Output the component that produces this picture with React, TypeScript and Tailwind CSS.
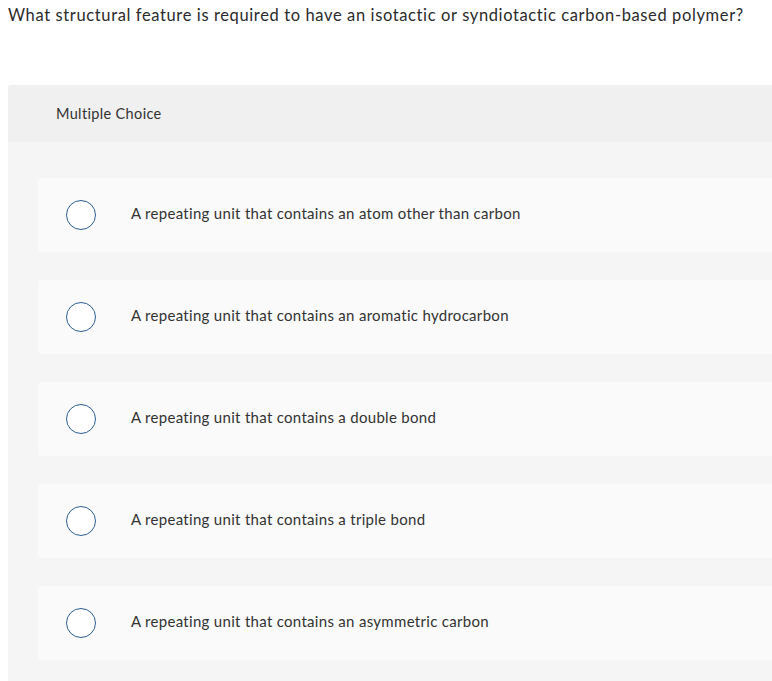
const options = [
  "A repeating unit that contains an atom other than carbon",
  "A repeating unit that contains an aromatic hydrocarbon",
  "A repeating unit that contains a double bond",
  "A repeating unit that contains a triple bond",
  "A repeating unit that contains an asymmetric carbon",
];

export default function App() {
  return (
    <div className="min-h-screen bg-white font-['Lato',sans-serif] text-[#2b2b2b] overflow-hidden">
      {/* Question */}
      <p className="pl-[8px] pt-[4px] text-[16.5px] leading-[22px] tracking-[0.62px] whitespace-nowrap">
        What structural feature is required to have an isotactic or syndiotactic carbon-based polymer?
      </p>

      {/* Answer panel */}
      <div className="ml-[8px] mt-[59px] rounded-tl-[3px] bg-[#f5f5f5] pb-[30px]">
        <div className="h-[57px] rounded-tl-[3px] bg-[#f0f0f0] pl-[48px] flex items-center">
          <span className="text-[14.5px] tracking-[0.35px] text-[#333]">Multiple Choice</span>
        </div>

        <div className="pt-[36px] pl-[30px] flex flex-col gap-[28px]">
          {options.map((opt) => (
            <label
              key={opt}
              className="h-[74px] rounded-l-[4px] bg-[#fafafa] flex items-center cursor-pointer"
            >
              <span className="ml-[28px] w-[30px] h-[30px] rounded-full border-[1.5px] border-[#2c5e91] bg-white shrink-0"></span>
              <span className="ml-[35px] -mt-[3px] text-[15px] tracking-[0.3px] text-[#333] whitespace-nowrap">{opt}</span>
            </label>
          ))}
        </div>
      </div>
    </div>
  );
}
